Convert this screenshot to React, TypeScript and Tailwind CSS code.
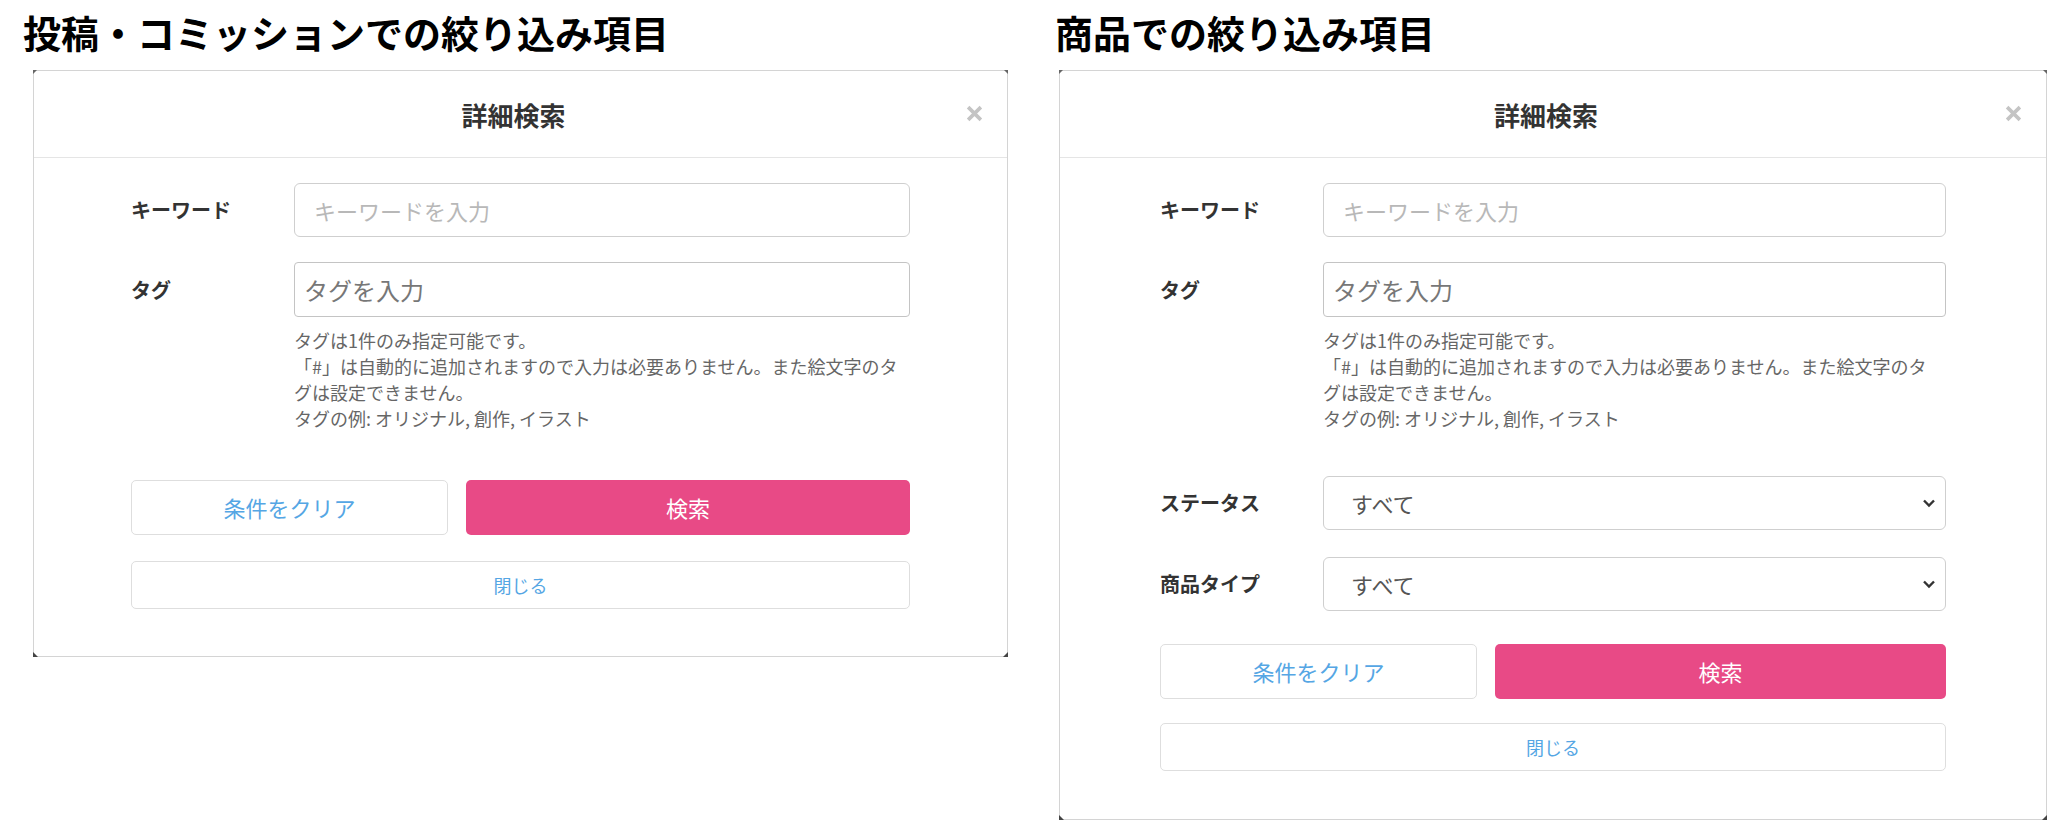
import React from 'react';

const CloseIcon = () => (
  <svg width="17" height="17" viewBox="0 0 16 16">
    <path d="M2 2L14 14M14 2L2 14" stroke="#c4c4c4" strokeWidth="3.4" />
  </svg>
);

const Chevron = () => (
  <svg width="14" height="10" viewBox="0 0 14 10">
    <path d="M2 2.5L7 7.5L12 2.5" fill="none" stroke="#333" strokeWidth="2.4" />
  </svg>
);

// tiny dark marks the screenshot shows on the modal corners
const Corners = () => (
  <>
    <span className="absolute -left-px -top-px border-t-[4px] border-r-[4px] border-t-[#666] border-r-transparent" />
    <span className="absolute -right-px -top-px border-t-[4px] border-l-[4px] border-t-[#666] border-l-transparent" />
    <span className="absolute -left-px -bottom-px border-b-[5px] border-r-[5px] border-b-[#444] border-r-transparent" />
    <span className="absolute -right-px -bottom-px border-b-[5px] border-l-[5px] border-b-[#444] border-l-transparent" />
  </>
);

const Row = ({ label, className = '', children }: { label: string; className?: string; children: React.ReactNode }) => (
  <div className={`flex items-center ${className}`}>
    <div className="w-[163px] shrink-0 text-[20px] font-bold text-[#333]">{label}</div>
    <div className="flex-1">{children}</div>
  </div>
);

const SelectBox = ({ value }: { value: string }) => (
  <div className="h-[54px] rounded-[6px] border border-[#cfcfcf] flex items-center justify-between pl-[27px] pr-[9px] text-[22px] text-[#555]">
    <span>{value}</span>
    <Chevron />
  </div>
);

const SearchModal = ({ width, bodyWidth, withSelects }: { width: string; bodyWidth: string; withSelects?: boolean }) => (
  <div className={`relative ${width} border border-[#d4d4d4] bg-white`}>
    <Corners />
    <div className="relative h-[87px] border-b border-[#e5e5e5] flex items-center justify-center">
      <span className="text-[26px] font-bold text-[#333] pr-[14px]">詳細検索</span>
      <span className="absolute right-[24px] top-[34px]">
        <CloseIcon />
      </span>
    </div>

    <div className={`mx-auto ${bodyWidth} pt-[25px] ${withSelects ? 'pb-[48px]' : 'pb-[47px]'}`}>
      <Row label="キーワード">
        <input
          className="w-full h-[54px] rounded-[6px] border border-[#cfcfcf] pl-[19px] text-[22px] outline-none placeholder:text-[#b8b8b8]"
          placeholder="キーワードを入力"
        />
      </Row>
      <Row label="タグ" className="mt-[25px]">
        <input
          className="w-full h-[55px] rounded-[4px] border border-[#c4c4c4] pl-[9px] text-[24px] outline-none placeholder:text-[#777]"
          placeholder="タグを入力"
        />
      </Row>
      <div className="ml-[163px] mt-[10px] text-[18px] leading-[26px] text-[#666]">
        タグは1件のみ指定可能です。
        <br />
        「#」は自動的に追加されますので入力は必要ありません。また絵文字のタ
        <br />
        グは設定できません。
        <br />
        タグの例: オリジナル, 創作, イラスト
      </div>

      {withSelects && (
        <>
          <Row label="ステータス" className="mt-[45px]">
            <SelectBox value="すべて" />
          </Row>
          <Row label="商品タイプ" className="mt-[27px]">
            <SelectBox value="すべて" />
          </Row>
        </>
      )}

      <div className={`flex gap-[18px] ${withSelects ? 'mt-[33px]' : 'mt-[49px]'}`}>
        <button className="w-[317px] h-[55px] rounded-[5px] border border-[#dedede] bg-white text-[22px] text-[#55a6e4]">
          条件をクリア
        </button>
        <button className="flex-1 h-[55px] rounded-[5px] bg-[#e84a86] text-[22px] text-white">検索</button>
      </div>
      <button
        className={`w-full h-[48px] rounded-[5px] border border-[#dedede] bg-white text-[18px] text-[#55a6e4] ${
          withSelects ? 'mt-[24px]' : 'mt-[26px]'
        }`}
      >
        閉じる
      </button>
    </div>
  </div>
);

const App: React.FC = () => {
  return (
    <div className="w-[2048px] h-[821px] bg-white flex font-['Noto_Sans_CJK_JP','Noto_Sans',sans-serif] overflow-hidden">
      <section className="w-[1055px] shrink-0 pl-[23px] pt-[12px]">
        <h2 className="text-[38px] leading-[40px] font-bold text-black">投稿・コミッションでの絞り込み項目</h2>
        <div className="mt-[18px] ml-[10px]">
          <SearchModal width="w-[975px]" bodyWidth="w-[779px]" />
        </div>
      </section>

      <section className="flex-1 pt-[12px]">
        <h2 className="text-[38px] leading-[40px] font-bold text-black">商品での絞り込み項目</h2>
        <div className="mt-[18px] ml-[4px]">
          <SearchModal width="w-[988px]" bodyWidth="w-[786px]" withSelects />
        </div>
      </section>
    </div>
  );
};

export default App;
